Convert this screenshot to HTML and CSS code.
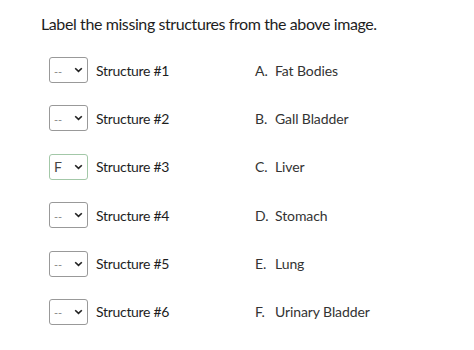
FILE: index.html
```html
<!DOCTYPE html>
<html>
<head>
<meta charset="utf-8">
<link rel="stylesheet" href="styles.css">
</head>
<body>
<div class="page">
  <h1 class="title">Label the missing structures from the above image.</h1>
  <div class="rows">
    <div class="row">
      <div class="sel"><select><option>--</option></select><svg class="chev" width="9" height="6" viewBox="0 0 9 6"><path d="M1.2 1.2 L4.5 4.4 L7.8 1.2" fill="none" stroke="#222" stroke-width="1.6"/></svg></div>
      <span class="label">Structure #1</span>
      <span class="opt"><span class="letter">A.</span>Fat Bodies</span>
    </div>
    <div class="row">
      <div class="sel"><select><option>--</option></select><svg class="chev" width="9" height="6" viewBox="0 0 9 6"><path d="M1.2 1.2 L4.5 4.4 L7.8 1.2" fill="none" stroke="#222" stroke-width="1.6"/></svg></div>
      <span class="label">Structure #2</span>
      <span class="opt"><span class="letter">B.</span>Gall Bladder</span>
    </div>
    <div class="row">
      <div class="sel sel-set"><select><option>F</option></select><svg class="chev" width="9" height="6" viewBox="0 0 9 6"><path d="M1.2 1.2 L4.5 4.4 L7.8 1.2" fill="none" stroke="#222" stroke-width="1.6"/></svg></div>
      <span class="label">Structure #3</span>
      <span class="opt"><span class="letter">C.</span>Liver</span>
    </div>
    <div class="row">
      <div class="sel"><select><option>--</option></select><svg class="chev" width="9" height="6" viewBox="0 0 9 6"><path d="M1.2 1.2 L4.5 4.4 L7.8 1.2" fill="none" stroke="#222" stroke-width="1.6"/></svg></div>
      <span class="label">Structure #4</span>
      <span class="opt"><span class="letter">D.</span>Stomach</span>
    </div>
    <div class="row">
      <div class="sel"><select><option>--</option></select><svg class="chev" width="9" height="6" viewBox="0 0 9 6"><path d="M1.2 1.2 L4.5 4.4 L7.8 1.2" fill="none" stroke="#222" stroke-width="1.6"/></svg></div>
      <span class="label">Structure #5</span>
      <span class="opt"><span class="letter">E.</span>Lung</span>
    </div>
    <div class="row">
      <div class="sel"><select><option>--</option></select><svg class="chev" width="9" height="6" viewBox="0 0 9 6"><path d="M1.2 1.2 L4.5 4.4 L7.8 1.2" fill="none" stroke="#222" stroke-width="1.6"/></svg></div>
      <span class="label">Structure #6</span>
      <span class="opt"><span class="letter">F.</span>Urinary Bladder</span>
    </div>
  </div>
</div>
</body>
</html>
```
FILE: styles.css
```css
html, body {
  margin: 0;
  padding: 0;
  background: #fff;
}
body {
  font-family: Lato, "Open Sans", sans-serif;
  color: #222;
}
.page {
  padding: 14px 0 0 41px;
}
.title {
  margin: 0;
  font-size: 16px;
  letter-spacing: -0.4px;
  font-weight: 400;
  line-height: 20px;
  color: #1e1e1e;
}
.rows {
  margin-top: 23px;
  margin-left: 8px;
  display: flex;
  flex-direction: column;
  gap: 22.4px;
}
.row {
  display: flex;
  align-items: center;
  height: 26px;
}
.sel {
  position: relative;
  width: 39px;
  height: 26px;
  flex: none;
}
.sel select {
  appearance: none;
  -webkit-appearance: none;
  box-sizing: border-box;
  width: 39px;
  height: 26px;
  margin: 0;
  padding: 2px 0 0 4px;
  border: 1px solid #999;
  border-radius: 3px;
  background: #fff;
  font-family: Lato, sans-serif;
  font-size: 11px;
  color: #888;
}
.sel-set select {
  border-color: #a3c8a8;
  padding: 0 0 0 4px;
  font-size: 14px;
  color: #444;
}
.chev {
  position: absolute;
  left: 25px;
  top: 10px;
  pointer-events: none;
}
.label {
  margin-left: 8px;
  width: 159px;
  font-size: 14px;
  letter-spacing: -0.3px;
  color: #1e1e1e;
}
.opt {
  font-size: 14px;
  letter-spacing: -0.1px;
  color: #333;
}
.letter {
  display: inline-block;
  width: 20px;
}
```
